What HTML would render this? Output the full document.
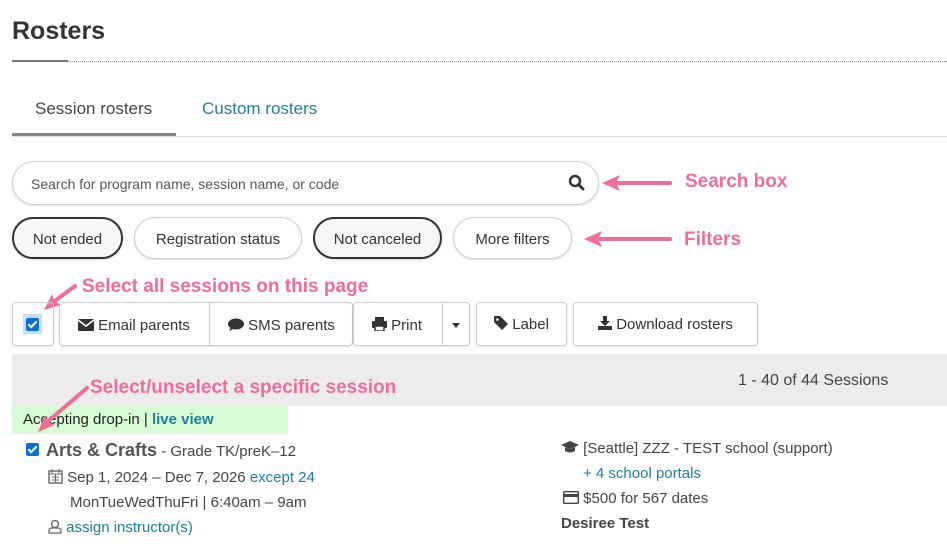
<!DOCTYPE html>
<html><head><meta charset="utf-8"><style>
*{box-sizing:border-box;margin:0;padding:0}
body{width:947px;height:558px;overflow:hidden;background:#fff;font-family:"Liberation Sans",sans-serif;color:#333;position:relative}
.a{position:absolute;white-space:nowrap}
.pink{color:#f06c9b;font-weight:bold;font-size:19px}
.link{color:#1b7f9f}
.pill{position:absolute;top:217px;height:42px;border:1px solid #ccc;border-radius:21px;font-size:15px;line-height:43px;text-align:center;box-shadow:0 1px 2px rgba(0,0,0,.15)}
.pill.d{border:2px solid #333;line-height:41px;background:#f7f7f7}
.btn{position:absolute;top:302px;height:44px;border:1px solid #ccc;border-radius:4px;font-size:15px;line-height:44px;text-align:center;box-shadow:0 1px 2px rgba(0,0,0,.12);color:#333}
.cb{display:inline-block;width:13px;height:13px;background:#0b6fd8;border-radius:2px;position:relative}
.cb:after{content:"";position:absolute;left:4px;top:1px;width:3px;height:7px;border:solid #fff;border-width:0 2px 2px 0;transform:rotate(45deg)}
</style></head><body>
<div class="a" style="left:12px;top:17px;font-size:25px;font-weight:bold;color:#333">Rosters</div>
<div class="a" style="left:12px;top:60px;width:56px;height:2px;background:#777"></div>
<div class="a" style="left:68px;top:61px;width:879px;border-top:1px dotted #888"></div>
<div class="a" style="left:35px;top:99px;font-size:17px;color:#444">Session rosters</div>
<div class="a link" style="left:202px;top:99px;font-size:17px">Custom rosters</div>
<div class="a" style="left:12px;top:136px;width:935px;height:1px;background:#ddd"></div>
<div class="a" style="left:12px;top:133px;width:164px;height:3px;background:#888"></div>

<div class="a" style="left:12px;top:161px;width:587px;height:44px;border:1px solid #ccc;border-radius:22px;box-shadow:0 1px 2px rgba(0,0,0,.12)"></div>
<div class="a" style="left:31px;top:176px;font-size:14px;color:#555">Search for program name, session name, or code</div>
<svg class="a" style="left:568px;top:174px" width="17" height="17" viewBox="0 0 17 17"><circle cx="7" cy="7" r="5" fill="none" stroke="#333" stroke-width="2.5"/><path d="M10.5 10.5 15 15" stroke="#333" stroke-width="3" stroke-linecap="round"/></svg>

<div class="pill d" style="left:12px;width:111px">Not ended</div>
<div class="pill" style="left:134px;width:168px">Registration status</div>
<div class="pill d" style="left:313px;width:129px">Not canceled</div>
<div class="pill" style="left:453px;width:119px">More filters</div>

<svg class="a" style="left:0;top:0" width="947" height="558">
<g fill="#f06c9b" stroke="#f06c9b">
<path d="M670 183 L615 183" stroke-width="4" stroke-linecap="round"/><path d="M602 183 L620 175 L616 183 L620 191Z" stroke="none"/>
<path d="M670 239 L597 239" stroke-width="4" stroke-linecap="round"/><path d="M584 239 L602 231 L598 239 L602 247Z" stroke="none"/>
<path d="M75 286 L52 303" stroke-width="4" stroke-linecap="round"/><path d="M44 310 L52 294 L54 301 L61 305Z" stroke="none"/>
</g></svg>
<div class="a pink" style="left:685px;top:171px">Search box</div>
<div class="a pink" style="left:684px;top:229px">Filters</div>
<div class="a pink" style="left:82px;top:276px">Select all sessions on this page</div>

<div class="btn" style="left:12px;width:42px"><div style="position:absolute;left:10px;top:11px;width:19px;height:20px;background:#c5ddf8"></div><span class="cb" style="position:absolute;left:13px;top:15px"></span></div>
<div class="btn" style="left:59px;width:294px"></div>
<div class="a" style="left:209px;top:303px;width:1px;height:42px;background:#ccc"></div>
<div class="a" style="left:78px;top:317px;font-size:15px"><svg width="16" height="12" viewBox="0 0 16 12" style="vertical-align:-1px"><rect width="16" height="12" rx="1" fill="#333"/><path d="M0 1 8 7 16 1" stroke="#fff" stroke-width="1.5" fill="none"/></svg> Email parents</div>
<div class="a" style="left:228px;top:317px;font-size:15px"><svg width="16" height="13" viewBox="0 0 16 13" style="vertical-align:-1px"><ellipse cx="8" cy="6" rx="8" ry="5.5" fill="#333"/><path d="M3 9 1 13 7 10Z" fill="#333"/></svg> SMS parents</div>
<div class="btn" style="left:353px;width:117px"></div>
<div class="a" style="left:442px;top:303px;width:1px;height:42px;background:#ccc"></div>
<div class="a" style="left:372px;top:317px;font-size:15px"><svg width="15" height="14" viewBox="0 0 15 14" style="vertical-align:-1px"><rect x="3" y="0" width="9" height="4" fill="#333"/><rect x="0" y="4" width="15" height="7" rx="1" fill="#333"/><rect x="3" y="9" width="9" height="5" fill="#fff" stroke="#333" stroke-width="1.5"/></svg> Print</div>
<div class="a" style="left:452px;top:323px;border:4px solid transparent;border-top:5px solid #333"></div>
<div class="btn" style="left:476px;width:91px"><svg width="14" height="14" viewBox="0 0 14 14" style="vertical-align:-1px"><path d="M0 0H6L14 8 8 14 0 6Z" fill="#333"/><circle cx="3.5" cy="3.5" r="1.3" fill="#fff"/></svg> Label</div>
<div class="btn" style="left:573px;width:185px"><svg width="14" height="14" viewBox="0 0 14 14" style="vertical-align:-1px"><path d="M5 0H9V5H12L7 10 2 5H5Z" fill="#333"/><rect y="10" width="14" height="4" fill="#333"/></svg> Download rosters</div>

<div class="a" style="left:12px;top:354px;width:935px;height:52px;background:#ececec"></div>
<div class="a pink" style="left:90px;top:377px">Select/unselect a specific session</div>
<div class="a" style="left:738px;top:372px;font-size:16px;color:#444">1 - 40 of 44 Sessions</div>
<div class="a" style="left:12px;top:406px;width:276px;height:28px;background:#d8fdd6"></div>
<div class="a" style="left:23px;top:411px;font-size:15px;color:#222">Accepting drop-in | <b class="link">live view</b></div>
<svg class="a" style="left:0;top:0" width="100" height="440"><path d="M87 388 L46 423" stroke="#f06c9b" stroke-width="4" stroke-linecap="round"/><path d="M38 432 L45 415 L48 422 L55 425Z" fill="#f06c9b"/></svg>

<span class="cb a" style="left:26px;top:443px"></span>
<div class="a" style="left:46px;top:440px;font-size:15px;color:#444"><b style="font-size:18px;color:#555">Arts &amp; Crafts</b> - Grade TK/preK–12</div>
<div class="a" style="left:48px;top:469px;font-size:15px;color:#444"><svg width="15" height="15" viewBox="0 0 15 15" style="vertical-align:-2px"><rect x="1" y="2" width="13" height="12" fill="none" stroke="#666" stroke-width="1.4"/><path d="M1 5H14M4 0V4M11 0V4M4 8H11M4 11H11M7.5 5V14" stroke="#666" stroke-width="1"/></svg> Sep 1, 2024 – Dec 7, 2026 <span class="link">except 24</span></div>
<div class="a" style="left:70px;top:494px;font-size:15px;color:#444">MonTueWedThuFri | 6:40am – 9am</div>
<div class="a" style="left:48px;top:519px;font-size:15px"><svg width="14" height="15" viewBox="0 0 14 15" style="vertical-align:-2px"><circle cx="7" cy="5" r="3.5" fill="none" stroke="#666" stroke-width="1.3"/><path d="M1 14V12Q1 9 4 9H10Q13 9 13 12V14Z" fill="none" stroke="#666" stroke-width="1.3"/></svg> <span class="link">assign instructor(s)</span></div>

<div class="a" style="left:561px;top:440px;font-size:15px;color:#444"><svg width="18" height="13" viewBox="0 0 18 13" style="vertical-align:-1px"><path d="M9 0 18 4 9 8 0 4Z" fill="#444"/><path d="M4 6V10Q9 13 14 10V6L9 8Z" fill="#444"/></svg> [Seattle] ZZZ - TEST school (support)</div>
<div class="a link" style="left:583px;top:465px;font-size:15px">+ 4 school portals</div>
<div class="a" style="left:563px;top:490px;font-size:15px;color:#444"><svg width="16" height="13" viewBox="0 0 16 13" style="vertical-align:-1px"><rect x="0.7" y="0.7" width="14.6" height="11.6" rx="1" fill="none" stroke="#444" stroke-width="1.4"/><rect x="0" y="3" width="16" height="3" fill="#444"/></svg> $500 for 567 dates</div>
<div class="a" style="left:561px;top:515px;font-size:15px;font-weight:bold;color:#444">Desiree Test</div>
</body></html>
